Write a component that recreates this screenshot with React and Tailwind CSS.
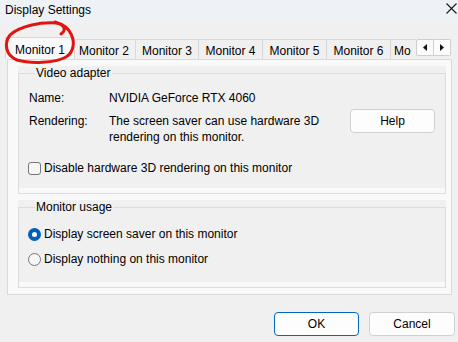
import React from 'react';

const font = { fontFamily: '"Liberation Sans", Arial, sans-serif' };

function Tab({ label, selected, width }) {
    if (selected) {
        return (
            <div className={`${width} h-[22px] -mr-[2px] -ml-[2px] relative z-10 flex items-center justify-center border border-b-0 border-[#d9d9d9] bg-[#f9f9f9]`}>
                <span className="pt-[2px]">{label}</span>
            </div>
        );
    }
    return (
        <div className={`${width} h-[20px] flex items-center justify-center border border-l-0 border-b-0 border-[#d9d9d9] bg-[#f0f0f0] whitespace-nowrap`}>
            <span className="pt-[3px]">{label}</span>
        </div>
    );
}

function GroupBox({ title, children, className }) {
    return (
        <div className={`bg-[#f0f0f0] ${className}`}>
            <fieldset className="border border-[#dcdcdc] px-[9px]">
                <legend className="ml-[7px] px-[1px] leading-[14px]">{title}</legend>
                {children}
            </fieldset>
        </div>
    );
}

function Checkbox() {
    return <div className="w-[13px] h-[13px] rounded-[3px] border border-[#767676] bg-[#f7f7f7]"></div>;
}

function Radio({ checked }) {
    if (checked) {
        return (
            <div className="w-[13px] h-[13px] rounded-full bg-[#005fb8] flex items-center justify-center">
                <div className="w-[5px] h-[5px] rounded-full bg-white"></div>
            </div>
        );
    }
    return <div className="w-[13px] h-[13px] rounded-full border border-[#767676] bg-[#f7f7f7]"></div>;
}

export default function App() {
    return (
        <div className="w-[458px] h-[342px] bg-[#f0f0f0] text-[12px] text-black relative overflow-hidden flex flex-col" style={font}>
            {/* title bar */}
            <div className="h-[23px] bg-[#eef2f6] flex items-center justify-between pl-[5px] pr-[1px]">
                <span className="-mt-[4px]">Display Settings</span>
                <svg width="11" height="11" viewBox="0 0 11 11" className="-mt-[7px]">
                    <path d="M0.5 0.5 L10.5 10.5 M10.5 0.5 L0.5 10.5" stroke="#1a1a1a" strokeWidth="1.1" />
                </svg>
            </div>

            {/* tabs */}
            <div className="mt-[14px] pl-[7px] flex items-end h-[22px]">
                <Tab label="Monitor 1" selected width="w-[70px]" />
                <Tab label="Monitor 2" width="w-[63px]" />
                <Tab label="Monitor 3" width="w-[63px]" />
                <Tab label="Monitor 4" width="w-[64px]" />
                <Tab label="Monitor 5" width="w-[64px]" />
                <Tab label="Monitor 6" width="w-[64px]" />
                <div className="w-[25px] h-[20px] flex items-center border-t border-[#d9d9d9] bg-[#f0f0f0] whitespace-nowrap pl-[3px] pt-[3px]">Mo</div>
                <div className="self-start mt-[2px] flex">
                    <div className="w-[18px] h-[17px] border border-[#cfcfcf] bg-[#fbfbfb] rounded-l-[2px] flex items-center justify-center">
                        <svg width="4" height="7" viewBox="0 0 4 7"><path d="M4 0 L0 3.5 L4 7 Z" fill="#111" /></svg>
                    </div>
                    <div className="w-[17px] h-[17px] border border-l-0 border-[#cfcfcf] bg-[#fbfbfb] rounded-r-[2px] flex items-center justify-center">
                        <svg width="4" height="7" viewBox="0 0 4 7"><path d="M0 0 L4 3.5 L0 7 Z" fill="#111" /></svg>
                    </div>
                </div>
            </div>

            {/* tab panel */}
            <div className="ml-[7px] w-[445px] h-[236px] border border-[#d9d9d9] bg-[#f9f9f9] pl-[10px] pr-[5px] pt-[6px] flex flex-col">
                <GroupBox title="Video adapter" className="h-[122px]">
                    <div className="h-[113px] flex flex-col">
                        <div className="flex mt-[10px] leading-[16px]">
                            <span className="w-[81px] pl-[1px]">Name:</span>
                            <span>NVIDIA GeForce RTX 4060</span>
                        </div>
                        <div className="flex mt-[7px] leading-[16px]">
                            <span className="w-[81px] pl-[1px]">Rendering:</span>
                            <span className="w-[220px]">The screen saver can use hardware 3D rendering on this monitor.</span>
                            <button className="ml-[21px] mt-[-4px] w-[85px] h-[24px] rounded-[4px] border border-[#d0d0d0] bg-[#fdfdfd] text-[12px]" style={font}>Help</button>
                        </div>
                        <div className="flex items-center gap-[3px] mt-[14px]">
                            <Checkbox />
                            <span>Disable hardware 3D rendering on this monitor</span>
                        </div>
                    </div>
                </GroupBox>
                <GroupBox title="Monitor usage" className="mt-[12px] h-[82px]">
                    <div className="h-[73px] flex flex-col">
                        <div className="flex items-center gap-[3px] mt-[11px]">
                            <Radio checked />
                            <span>Display screen saver on this monitor</span>
                        </div>
                        <div className="flex items-center gap-[3px] mt-[7px]">
                            <Radio />
                            <span>Display nothing on this monitor</span>
                        </div>
                    </div>
                </GroupBox>
            </div>

            {/* buttons */}
            <div className="flex justify-end gap-[10px] mt-[17px] pr-[3px]">
                <button className="w-[85px] h-[24px] rounded-[4px] border border-[#0067c0] bg-[#fdfdfd] text-[12px]" style={font}>OK</button>
                <button className="w-[86px] h-[24px] rounded-[4px] border border-[#d0d0d0] bg-[#fdfdfd] text-[12px]" style={font}>Cancel</button>
            </div>

            {/* red annotation circle */}
            <svg className="absolute left-0 top-0 z-20 pointer-events-none" width="90" height="70" viewBox="0 0 90 70">
                <path
                    d="M61 34 C67 30 64 24 56 23 C40 22 20 26 10 35 C4 43 5 55 17 60 C31 64 55 63 66 57 C74 52 75 42 71 34 C68 27 62 24 55 22"
                    fill="none"
                    stroke="#e3140f"
                    strokeWidth="3"
                    strokeLinecap="round"
                    strokeLinejoin="round"
                />
            </svg>
        </div>
    );
}
